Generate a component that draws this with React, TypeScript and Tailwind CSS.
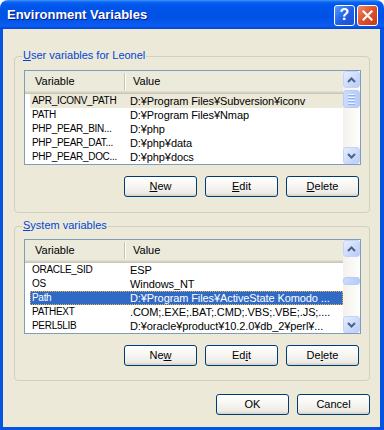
import React from "react";

type Row = [string, string];

const userVars: Row[] = [
  ["APR_ICONV_PATH", "D:¥Program Files¥Subversion¥iconv"],
  ["PATH", "D:¥Program Files¥Nmap"],
  ["PHP_PEAR_BIN...", "D:¥php"],
  ["PHP_PEAR_DAT...", "D:¥php¥data"],
  ["PHP_PEAR_DOC...", "D:¥php¥docs"],
];

const systemVars: Row[] = [
  ["ORACLE_SID", "ESP"],
  ["OS", "Windows_NT"],
  ["Path", "D:¥Program Files¥ActiveState Komodo ..."],
  ["PATHEXT", ".COM;.EXE;.BAT;.CMD;.VBS;.VBE;.JS;...."],
  ["PERL5LIB", "D:¥oracle¥product¥10.2.0¥db_2¥perl¥..."],
];

function Mnemonic({ label, u }: { label: string; u?: number }) {
  if (u === undefined) return <>{label}</>;
  return (
    <>
      {label.slice(0, u)}
      <u>{label[u]}</u>
      {label.slice(u + 1)}
    </>
  );
}

function XpButton({ label, u }: { label: string; u?: number }) {
  return (
    <button className="w-[73px] h-[21px] shrink-0 rounded-[3px] border border-[#003C74] bg-[linear-gradient(to_bottom,#FFFFFF_0%,#F7F6F2_45%,#ECEBE6_85%,#D6D0C5_100%)] text-[11px] leading-[19px] text-black">
      <Mnemonic label={label} u={u} />
    </button>
  );
}

function Chevron({ up }: { up?: boolean }) {
  return (
    <svg width="9" height="6" viewBox="0 0 9 6">
      <path
        d={up ? "M1 5 L4.5 1.5 L8 5" : "M1 1 L4.5 4.5 L8 1"}
        fill="none"
        stroke="#4D6185"
        strokeWidth="2"
      />
    </svg>
  );
}

function ScrollButton({ up }: { up?: boolean }) {
  return (
    <div className="h-[17px] w-[17px] shrink-0 flex items-center justify-center rounded-[3px] border border-[#C3D3FD] bg-[linear-gradient(135deg,#E6EEFF,#B8CCF8)]">
      <Chevron up={up} />
    </div>
  );
}

function ScrollBar({ thumbClass, grip }: { thumbClass: string; grip?: boolean }) {
  return (
    <div className="w-[17px] h-full shrink-0 flex flex-col bg-[linear-gradient(to_right,#F3F1EC,#FEFEFB)]">
      <ScrollButton up />
      <div className="flex-1 flex flex-col">
        <div
          className={`${thumbClass} w-[17px] shrink-0 flex flex-col items-center justify-center gap-[1px] rounded-[3px] border border-[#B8CCF8] bg-[linear-gradient(to_right,#CCDAFD,#B7CBF8)]`}
        >
          {grip &&
            [0, 1, 2, 3].map((i) => (
              <div key={i} className="w-[7px] h-[1px] bg-[#EEF4FE] border-b border-[#8CB0F8] box-content" />
            ))}
        </div>
      </div>
      <ScrollButton />
    </div>
  );
}

function ListView({
  rows,
  selected,
  active,
  thumbClass,
  grip,
}: {
  rows: Row[];
  selected: number;
  active?: boolean;
  thumbClass: string;
  grip?: boolean;
}) {
  return (
    <div className="h-[95px] w-full flex border border-[#7F9DB9] bg-white">
      <div className="flex-1 min-w-0 flex flex-col overflow-hidden">
        {/* column header */}
        <div className="h-[23px] shrink-0 flex items-center bg-[#EBEADB] shadow-[inset_0_-1px_#CBC7B8,inset_0_-2px_#D6D2C2,inset_0_-3px_#E2DECD] text-black">
          <div className="w-[99px] pl-[10px] pb-[2px]">Variable</div>
          <div className="w-[1px] h-[17px] mb-[3px] bg-[#C7C5B2]" />
          <div className="w-[1px] h-[17px] mb-[3px] bg-white" />
          <div className="pl-[7px] pb-[2px]">Value</div>
        </div>
        {rows.map(([name, value], i) => {
          const isSel = i === selected;
          const rowCls = isSel
            ? active
              ? "bg-[#316AC5] text-white outline outline-1 outline-dotted outline-[#E8B43C] -outline-offset-1"
              : "bg-[#ECE9D8] text-black"
            : "text-black";
          return (
            <div key={name} className={`ml-[5px] h-[14px] shrink-0 flex leading-[14px] whitespace-nowrap ${rowCls}`}>
              <div className="w-[95px] pl-[2px] overflow-hidden text-[10px] tracking-[-0.3px]">{name}</div>
              <div className="flex-1 pl-[5px] overflow-hidden tracking-[-0.1px]">{value}</div>
            </div>
          );
        })}
      </div>
      <ScrollBar thumbClass={thumbClass} grip={grip} />
    </div>
  );
}

function GroupBox({
  title,
  u,
  className,
  children,
}: {
  title: string;
  u: number;
  className: string;
  children: React.ReactNode;
}) {
  return (
    <div className={`relative mr-[10px] ml-[11px] border border-[#D0D0BF] rounded-[4px] pl-[9px] pr-[8px] ${className}`}>
      <span className="absolute left-[7px] -top-[8px] px-[1px] bg-[#ECE9D8] text-[#0046D5] leading-[13px]">
        <Mnemonic label={title} u={u} />
      </span>
      {children}
    </div>
  );
}

export default function App() {
  return (
    <div className="w-[384px] h-[430px] flex flex-col bg-white font-['Liberation_Sans',Arial,sans-serif] text-[11px]">
      {/* Title bar */}
      <div className="h-[29px] shrink-0 flex items-center pl-[7px] pr-[6px] rounded-t-[8px] bg-[linear-gradient(to_bottom,#3D95FF_0%,#0A62F0_8%,#0055EA_20%,#0052E6_60%,#0A5CF2_88%,#0046D4_100%)]">
        <span className="flex-1 text-white font-bold text-[13px] [text-shadow:1px_1px_0_#0A1883]">
          Environment Variables
        </span>
        <div className="flex gap-[2px] pt-[1px]">
          <div className="w-[21px] h-[21px] rounded-[3px] border border-white bg-[linear-gradient(135deg,#5C9BFF,#2260E8_50%,#1B4FD0)] flex items-center justify-center text-white font-bold text-[16px] leading-none">
            ?
          </div>
          <div className="w-[21px] h-[21px] rounded-[3px] border border-white bg-[linear-gradient(135deg,#F0896A,#E0502B_50%,#C7391A)] flex items-center justify-center">
            <svg width="11" height="11" viewBox="0 0 11 11">
              <path d="M1.5 1.5 L9.5 9.5 M9.5 1.5 L1.5 9.5" stroke="white" strokeWidth="2.2" strokeLinecap="square" />
            </svg>
          </div>
        </div>
      </div>

      {/* Client area */}
      <div className="flex-1 flex flex-col bg-[#ECE9D8] border-l-[3px] border-r-[4px] border-b-[3px] border-[#0553E1] pt-[27px]">
        <GroupBox title="User variables for Leonel" u={0} className="pt-[13px] pb-[15px]">
          <ListView rows={userVars} selected={0} thumbClass="mt-[2px] h-[18px]" grip />
          <div className="mt-[11px] flex justify-end gap-[8px] pr-[2px]">
            <XpButton label="New" u={0} />
            <XpButton label="Edit" u={0} />
            <XpButton label="Delete" u={0} />
          </div>
        </GroupBox>

        <GroupBox title="System variables" u={0} className="mt-[13px] pt-[12px] pb-[14px]">
          <ListView rows={systemVars} selected={2} active thumbClass="mt-[20px] h-[8px]" />
          <div className="mt-[11px] flex justify-end gap-[8px] pr-[2px]">
            <XpButton label="New" u={2} />
            <XpButton label="Edit" u={2} />
            <XpButton label="Delete" u={2} />
          </div>
        </GroupBox>

        <div className="mt-[13px] flex justify-end gap-[8px] pr-[10px]">
          <XpButton label="OK" />
          <XpButton label="Cancel" />
        </div>
      </div>
    </div>
  );
}
